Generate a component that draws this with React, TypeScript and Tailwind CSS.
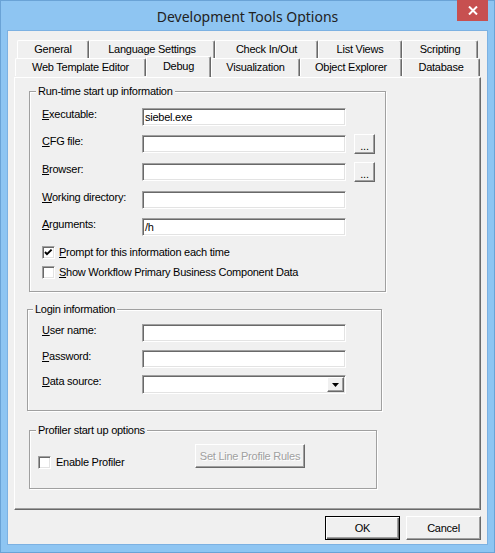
import type { ReactNode } from "react";

// classic 3D edges
const sunken =
  "border border-t-[#a0a0a0] border-l-[#a0a0a0] border-r-white border-b-white shadow-[inset_1px_1px_0_#696969,inset_-1px_-1px_0_#e3e3e3] bg-white";
const raised =
  "border border-t-white border-l-white border-r-[#696969] border-b-[#696969] shadow-[inset_-1px_-1px_0_#a0a0a0] bg-[#f0f0f0]";
const etched =
  "relative border border-[#a0a0a0] shadow-[inset_1px_1px_0_#fff,1px_1px_0_#fff]";

const topTabs = [
  { label: "General", w: "w-[72px]" },
  { label: "Language Settings", w: "w-[126px]" },
  { label: "Check In/Out", w: "w-[103px]" },
  { label: "List Views", w: "w-[84px]" },
  { label: "Scripting", w: "w-[76px]" },
];

const frontTabs = [
  { label: "Web Template Editor", w: "w-[131px]" },
  { label: "Debug", w: "w-[65px]", selected: true },
  { label: "Visualization", w: "w-[89px]" },
  { label: "Object Explorer", w: "w-[102px]" },
  { label: "Database", w: "w-[78px]" },
];

const Tab = ({ label, w, selected }: { label: string; w: string; selected?: boolean }) => (
  <div
    className={`${w} ${
      selected ? "relative z-10 -mt-[2px] h-[21px] pt-[3px]" : "h-[18px] pt-[2px]"
    } shrink-0 rounded-t-[2px] border-l border-t border-r border-l-white border-t-white border-r-[#696969] bg-[#f0f0f0] text-center leading-[13px] shadow-[inset_-1px_0_0_#a0a0a0]`}
  >
    {label}
  </div>
);

const Mn = ({ c }: { c: string }) => <span className="underline underline-offset-[1px]">{c}</span>;

const Field = ({
  label,
  value,
  browse,
  mt,
}: {
  label: ReactNode;
  value?: string;
  browse?: boolean;
  mt: string;
}) => (
  <div className={`flex h-[18px] ${mt}`}>
    <div className="w-[100px] shrink-0 leading-[13px]">{label}</div>
    <div className={`${sunken} h-[18px] w-[204px] pl-[2px] pt-[2px] leading-[13px]`}>{value}</div>
    {browse && (
      <div
        className={`${raised} ml-[8px] -mt-[1px] flex h-[20px] w-[21px] items-end justify-center pb-[2px] leading-[10px]`}
      >
        ...
      </div>
    )}
  </div>
);

const Check = ({ checked }: { checked?: boolean }) => (
  <div className={`${sunken} h-[13px] w-[13px] shrink-0`}>
    {checked && (
      <svg width="11" height="11" viewBox="0 0 11 11">
        <path d="M2 5 L4 7.2 L8.6 2.6" fill="none" stroke="#000" strokeWidth="1.9" />
      </svg>
    )}
  </div>
);

export default function App() {
  return (
    <div className="h-[553px] w-[495px] border border-[#6aa3d6] bg-[#8ec5f2] font-['Liberation_Sans',Arial,sans-serif] text-[11px] tracking-[-0.25px] text-black">
      {/* title bar */}
      <div className="relative flex h-[30px] items-center justify-center">
        <span className="font-['Noto_Sans',sans-serif] text-[14px] tracking-normal text-[#222]">
          Development Tools Options
        </span>
        <div className="absolute right-[6px] -top-[1px] flex h-[21px] w-[31px] items-center justify-center bg-[#c75050]">
          <svg width="10" height="9" viewBox="0 0 10 9">
            <path d="M1 0.5 L9 8.5 M9 0.5 L1 8.5" stroke="#fff" strokeWidth="2" />
          </svg>
        </div>
      </div>

      {/* client area */}
      <div className="ml-[7px] h-[513px] w-[479px] bg-[#f0f0f0] shadow-[0_0_0_1px_#7cb1e2]">
        <div className="pt-[9px]">
          <div className="flex pl-[9px]">
            {topTabs.map((t) => (
              <Tab key={t.label} {...t} />
            ))}
          </div>
          <div className="flex pl-[7px]">
            {frontTabs.map((t) => (
              <Tab key={t.label} {...t} />
            ))}
          </div>
        </div>

        {/* tab page */}
        <div className="ml-[6px] h-[433px] w-[467px] border border-l-white border-t-white border-r-[#696969] border-b-[#696969] shadow-[inset_-1px_-1px_0_#a0a0a0]">
          <div className={`${etched} ml-[14px] mt-[13px] h-[201px] w-[357px] pl-[12px] pt-[16px]`}>
            <span className="absolute -top-[7px] left-[6px] bg-[#f0f0f0] px-[2px] leading-[13px]">
              Run-time start up information
            </span>
            <Field mt="mt-0" label={<><Mn c="E" />xecutable:</>} value="siebel.exe" />
            <Field mt="mt-[9px]" label={<><Mn c="C" />FG file:</>} browse />
            <Field mt="mt-[10px]" label={<><Mn c="B" />rowser:</>} browse />
            <Field mt="mt-[10px]" label={<><Mn c="W" />orking directory:</>} />
            <Field mt="mt-[9px]" label={<><Mn c="A" />rguments:</>} value="/h" />
            <div className="mt-[10px] flex h-[13px] items-center">
              <Check checked />
              <span className="ml-[4px] leading-[13px]">
                <Mn c="P" />rompt for this information each time
              </span>
            </div>
            <div className="mt-[7px] flex h-[13px] items-center">
              <Check />
              <span className="ml-[4px] leading-[13px]">
                <Mn c="S" />how Workflow Primary Business Component Data
              </span>
            </div>
          </div>

          <div className={`${etched} ml-[12px] mt-[17px] h-[102px] w-[355px] pl-[14px] pt-[14px]`}>
            <span className="absolute -top-[7px] left-[5px] bg-[#f0f0f0] px-[2px] leading-[13px]">
              Login information
            </span>
            <Field mt="mt-0" label={<><Mn c="U" />ser name:</>} />
            <Field mt="mt-[8px]" label={<><Mn c="P" />assword:</>} />
            <div className="mt-[7px] flex h-[19px]">
              <div className="w-[100px] shrink-0 leading-[13px]">
                <Mn c="D" />ata source:
              </div>
              <div className={`${sunken} flex h-[19px] w-[204px] justify-end p-[1px]`}>
                <div className={`${raised} flex h-[15px] w-[17px] items-center justify-center`}>
                  <svg width="7" height="4" viewBox="0 0 7 4">
                    <path d="M0 0 H7 L3.5 4 Z" fill="#000" />
                  </svg>
                </div>
              </div>
            </div>
          </div>

          <div className={`${etched} ml-[14px] mt-[19px] h-[59px] w-[348px] pl-[8px] pt-[13px]`}>
            <span className="absolute -top-[7px] left-[6px] bg-[#f0f0f0] px-[2px] leading-[13px]">
              Profiler start up options
            </span>
            <div className="flex items-start">
              <div className="mt-[12px] flex w-[157px] items-center">
                <Check />
                <span className="ml-[5px] leading-[13px]">Enable Profiler</span>
              </div>
              <div
                className={`${raised} flex h-[24px] w-[110px] items-center justify-center text-[#a0a0a0] [text-shadow:1px_1px_0_#fff]`}
              >
                Set Line Profile Rules
              </div>
            </div>
          </div>
        </div>

        {/* dialog buttons */}
        <div className="mt-[6px] flex justify-end gap-[6px] pr-[6px]">
          <div className="flex h-[24px] w-[75px] items-center justify-center border border-black bg-[#f0f0f0] shadow-[inset_1px_1px_0_#fff,inset_-1px_-1px_0_#696969,inset_-2px_-2px_0_#a0a0a0]">
            OK
          </div>
          <div className={`${raised} flex h-[24px] w-[75px] items-center justify-center`}>Cancel</div>
        </div>
      </div>
    </div>
  );
}
